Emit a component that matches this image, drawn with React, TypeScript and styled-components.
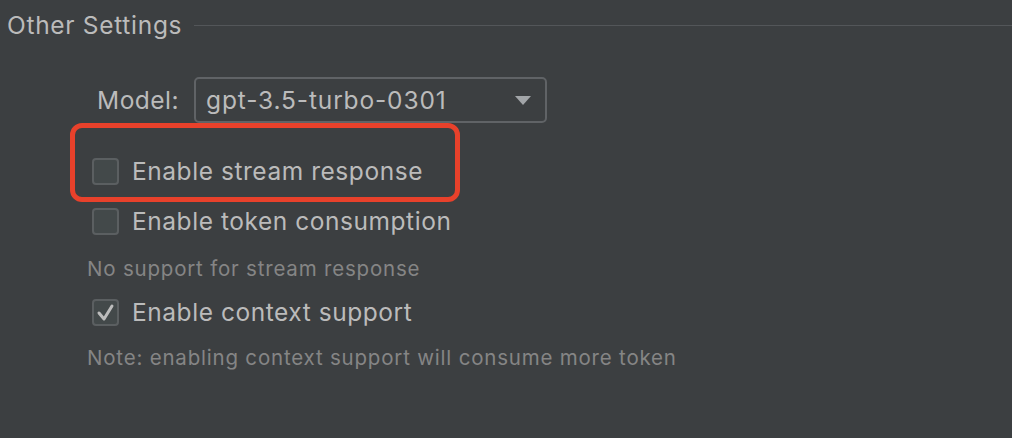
import React from "react";
import styled, { createGlobalStyle } from "styled-components";

const Global = createGlobalStyle`
  html, body { margin: 0; padding: 0; background: #3c3f41; }
  body { font-family: Inter, "Noto Sans", "Liberation Sans", sans-serif; -webkit-font-smoothing: antialiased; }
`;

const Page = styled.div`
  width: 1012px;
  height: 438px;
  background: #3c3f41;
  color: #bbbbbb;
  overflow: hidden;
`;

const Header = styled.div`
  display: flex;
  align-items: center;
  height: 50px;
  padding-left: 7px;
`;

const Title = styled.span`
  font-size: 24.5px;
  letter-spacing: 0.7px;
  color: #bbbbbb;
  white-space: nowrap;
`;

const Rule = styled.div`
  flex: 1;
  height: 1px;
  margin-left: 12px;
  background: #535659;
`;

const Body = styled.div`
  display: flex;
  flex-direction: column;
  padding-left: 87px;
`;

const ModelRow = styled.div`
  display: flex;
  align-items: center;
  height: 46px;
  margin-top: 27px;
  padding-left: 10px;
  gap: 15px;
`;

const Label = styled.span`
  font-size: 24.5px;
  letter-spacing: 0.5px;
`;

const Combo = styled.div`
  box-sizing: border-box;
  width: 353px;
  height: 46px;
  border: 2px solid #606366;
  border-radius: 5px;
  display: flex;
  align-items: center;
  justify-content: space-between;
  padding: 0 14px 0 10px;
  font-size: 24.5px;
  letter-spacing: 0.85px;
`;

const CheckRow = styled.div<{ $h: number }>`
  position: relative;
  display: flex;
  align-items: center;
  height: ${(p) => p.$h}px;
  padding-left: 5px;
  gap: 13px;
  font-size: 24.5px;
  letter-spacing: 0.55px;
`;

const Box = styled.div`
  box-sizing: border-box;
  width: 27px;
  height: 27px;
  border: 2px solid #5b5f61;
  border-radius: 4px;
  background: #43494a;
  display: flex;
  align-items: center;
  justify-content: center;
`;

const Highlight = styled.div`
  position: absolute;
  left: -17px;
  top: -23px;
  width: 390px;
  height: 79px;
  box-sizing: border-box;
  border: 5px solid #e8412b;
  border-radius: 12px;
  pointer-events: none;
`;

const Hint = styled.div<{ $h: number }>`
  display: flex;
  align-items: center;
  height: ${(p) => p.$h}px;
  font-size: 20.5px;
  letter-spacing: 0.8px;
  color: #858585;
`;

const Arrow = () => (
  <svg width="16" height="9" viewBox="0 0 16 9">
    <polygon points="0,0 16,0 8,9" fill="#a2a5a8" />
  </svg>
);

const Check = () => (
  <svg width="21" height="21" viewBox="0 0 21 21">
    <polyline points="4,11 9,17 17,4" fill="none" stroke="#bcbcbc" strokeWidth="3" strokeLinecap="round" strokeLinejoin="round" />
  </svg>
);

export default function App() {
  return (
    <Page>
      <Global />
      <Header>
        <Title>Other Settings</Title>
        <Rule />
      </Header>
      <Body>
        <ModelRow>
          <Label>Model:</Label>
          <Combo>
            <span>gpt-3.5-turbo-0301</span>
            <Arrow />
          </Combo>
        </ModelRow>
        <CheckRow $h={50} style={{ marginTop: 23 }}>
          <Highlight />
          <Box />
          <span>Enable stream response</span>
        </CheckRow>
        <CheckRow $h={50}>
          <Box />
          <span>Enable token consumption</span>
        </CheckRow>
        <Hint $h={44}>No support for stream response</Hint>
        <CheckRow $h={44}>
          <Box>
            <Check />
          </Box>
          <span>Enable context support</span>
        </CheckRow>
        <Hint $h={46}>Note: enabling context support will consume more token</Hint>
      </Body>
    </Page>
  );
}
